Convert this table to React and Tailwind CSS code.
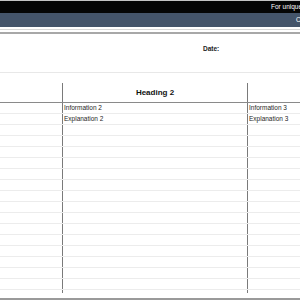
export default function App() {
  const rows = Array.from({ length: 17 });
  const font = { fontFamily: '"Liberation Sans", Arial, sans-serif' };
  return (
    <div className="w-[300px] h-[300px] overflow-hidden bg-white flex flex-col" style={font}>
      <div className="h-[1px] bg-[#c4c4c4] shrink-0" />
      <div className="h-[12px] bg-[#050505] shrink-0 flex items-center pl-[271px] whitespace-nowrap overflow-hidden">
        <span className="text-[6.5px] leading-none text-white">For unique printable templates</span>
      </div>
      <div className="h-[14px] bg-[#44546a] shrink-0 flex items-center pl-[296px] whitespace-nowrap overflow-hidden">
        <span className="text-[6.5px] leading-none text-white">Created</span>
      </div>
      <div className="h-[2px] shrink-0" />
      <div className="h-[1px] bg-[#d6d6d6] shrink-0" />
      <div className="h-[2px] shrink-0" />
      <div className="h-[2px] bg-[#a8a8a8] shrink-0" />
      <div className="h-[39px] shrink-0 border-b border-[#e8e8e8] flex items-start pl-[203px] pt-[12px]">
        <span className="text-[6.5px] font-bold text-[#222] leading-none">Date:</span>
      </div>
      <div className="grid grid-cols-[62px_185px_53px] shrink-0 border-b border-[#8a8a8a]">
        <div className="h-[29px]" />
        <div className="h-[29px] pt-[10px]">
          <div className="h-[19px] border-l border-[#7a7a7a] flex items-center justify-center">
            <span className="text-[8px] font-bold text-[#111] leading-none">Heading 2</span>
          </div>
        </div>
        <div className="h-[29px] pt-[10px]">
          <div className="h-[19px] border-l border-[#7a7a7a]" />
        </div>
      </div>
      {rows.map((_, i) => (
        <div key={i} className="grid grid-cols-[62px_185px_53px] shrink-0 border-b border-[#ececec]">
          <div className="h-[10px]" />
          <div className="h-[10px] border-l border-[#7a7a7a] flex items-center pl-[1px] whitespace-nowrap overflow-hidden">
            <span className="text-[6.5px] leading-none text-[#262626]">
              {i === 0 ? "Information 2" : i === 1 ? "Explanation 2" : ""}
            </span>
          </div>
          <div className="h-[10px] border-l border-[#7a7a7a] flex items-center pl-[1px] whitespace-nowrap overflow-hidden">
            <span className="text-[6.5px] leading-none text-[#262626]">
              {i === 0 ? "Information 3" : i === 1 ? "Explanation 3" : ""}
            </span>
          </div>
        </div>
      ))}
      <div className="grid grid-cols-[62px_185px_53px] shrink-0">
        <div className="h-[3px]" />
        <div className="h-[3px] border-l border-[#7a7a7a]" />
        <div className="h-[3px] border-l border-[#7a7a7a]" />
      </div>
      <div className="h-[5px] shrink-0" />
      <div className="h-[3px] bg-[#9a9a9a] shrink-0" />
    </div>
  );
}
